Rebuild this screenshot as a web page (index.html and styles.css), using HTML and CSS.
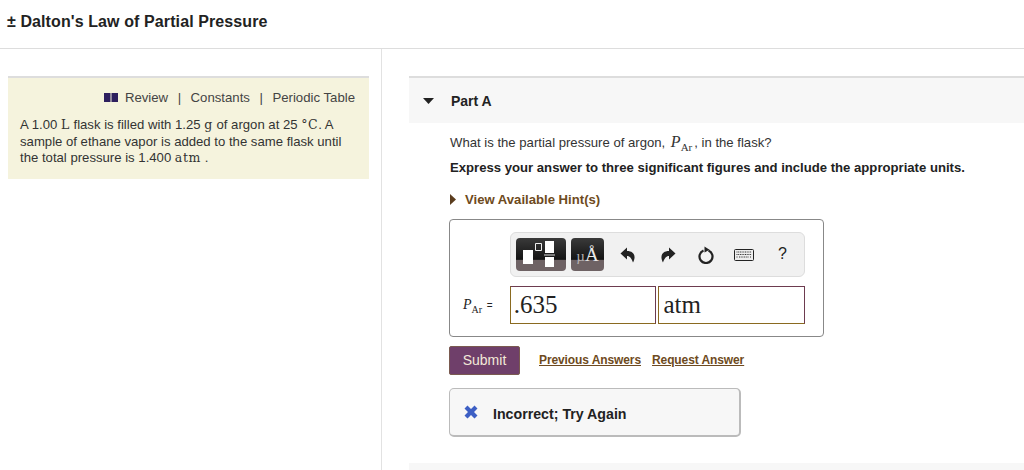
FILE: index.html
```html
<!DOCTYPE html>
<html lang="en">
<head>
<meta charset="utf-8">
<title>Dalton's Law of Partial Pressure</title>
<link rel="stylesheet" href="styles.css">
</head>
<body>
<header class="top"><h1>± Dalton's Law of Partial Pressure</h1></header>
<div class="cols">
  <aside class="left">
    <section class="intro">
      <div class="links">
        <svg class="book" width="14" height="9" viewBox="0 0 14 9"><path d="M0 0h6.500v9H0zM7.500 0H14v9H7.500z" fill="#2d1f5e"/></svg>
        <span>Review</span><i>|</i><span>Constants</span><i>|</i><span>Periodic Table</span>
      </div>
      <p>A 1.00 <span class="m">L</span> flask is filled with 1.25 <span class="m">g</span> of argon at 25 <span class="m">°C</span>. A sample of ethane vapor is added to the same flask until the total pressure is 1.400 <span class="m">atm</span> .</p>
    </section>
  </aside>
  <main class="right">
    <div class="part-head">
      <svg class="tri-down" width="11" height="6" viewBox="0 0 11 6"><path d="M0 0h11L5.500 6z" fill="#222"/></svg>
      <span>Part A</span>
    </div>
    <div class="body">
      <p class="q">What is the partial pressure of argon, <span class="mv">P<sub>Ar</sub></span>, in the flask?</p>
      <p class="ex">Express your answer to three significant figures and include the appropriate units.</p>
      <div class="hint">
        <svg width="6" height="11" viewBox="0 0 6 11"><path d="M0 0l6 5.500L0 11z" fill="#5b3d1e"/></svg>
        <span>View Available Hint(s)</span>
      </div>
      <div class="answer">
        <div class="toolbar">
          <div class="tbtn t1">
            <svg width="50" height="33" viewBox="0 0 50 33">
              <path d="M7 12h10v14H7z" fill="#fff"/>
              <path d="M19.500 5.500h6v7h-6z" fill="none" stroke="#eee"/>
              <path d="M29 3h9v12h-9zM29 19h9v10h-9z" fill="#fff"/>
              <path d="M28 16.500h11v1H28z" fill="#ddd"/>
            </svg>
          </div>
          <div class="tbtn t2"><span class="mu">µ</span><span class="ang">Å</span></div>
          <svg class="ic undo" width="16" height="16" viewBox="0 0 16 16"><path d="M7 .5L.5 6.500 7 12.500V9c3 0 4.500 2.500 6 6.500 3-5 2-11.500-6-11.500z" fill="#222"/></svg>
          <svg class="ic redo" width="16" height="16" viewBox="0 0 16 16"><path d="M9 .5l6.500 6L9 12.500V9c-3 0-4.500 2.500-6 6.500-3-5-2-11.500 6-11.500z" fill="#222"/></svg>
          <svg class="ic reload" width="18" height="18" viewBox="0 0 18 18"><path d="M6.500 4.500a6.500 6.500 0 1 0 5 0" fill="none" stroke="#222" stroke-width="2.200"/><path d="M7.500 .5l5 3.200-5 2.800z" fill="#222"/></svg>
          <svg class="ic kbd" width="20" height="12" viewBox="0 0 20 12"><rect x=".5" y=".5" width="19" height="11" rx="1" fill="#eee" stroke="#222"/><path d="M2.500 3h15M2.500 5.500h15M2.500 8h1M5 8h10M16 8h1.500" stroke="#333" stroke-dasharray="1 .7" fill="none"/></svg>
          <span class="help">?</span>
        </div>
        <div class="row">
          <span class="lab"><span class="mv">P<sub>Ar</sub></span> <span class="eq">=</span></span>
          <div class="inp v">.635</div>
          <div class="inp u">atm</div>
        </div>
      </div>
      <div class="actions">
        <button class="submit" type="button">Submit</button>
        <a class="lnk first">Previous Answers</a>
        <a class="lnk">Request Answer</a>
      </div>
      <div class="fb">
        <svg width="14" height="14" viewBox="0 0 14 14"><path d="M3.500 .5L7 4 10.500 .5 13.500 3.500 10 7l3.500 3.500-3 3L7 10l-3.500 3.500-3-3L4 7 .5 3.500z" fill="#3d5fc4"/></svg>
        <span class="fb-text">Incorrect; Try Again</span>
      </div>
    </div>
    <div class="strip"></div>
  </main>
</div>
</body>
</html>
```

FILE: styles.css
```css
* { box-sizing: border-box; }
html, body { margin: 0; height: 470px; overflow: hidden; }
body { font-family: "Liberation Sans", Arial, sans-serif; color: #222; background: #fff; }
.top { height: 49px; border-bottom: 1px solid #ddd; padding: 13px 0 0 7px; }
h1 { margin: 0; font-size: 16px; line-height: 18px; font-weight: 700; color: #222; letter-spacing: .1px; }
.cols { display: flex; height: 421px; }
.left { width: 382px; border-right: 1px solid #e2e2e2; padding: 27px 12px 0 8px; }
.intro { height: 103px; background: #f5f3dd; border-top: 2px solid #ddd; padding: 11px 14px 0 12px; font-size: 13.200px; color: #333; }
.links { display: flex; justify-content: flex-end; align-items: center; height: 16px; color: #444; }
.book { margin-right: 7px; }
.links i { font-style: normal; margin: 0 9.500px; }
.intro p { margin: 12px 0 0; line-height: 16.500px; font-size: 13.150px; }
.m { font-family: "DejaVu Serif", "Liberation Serif", serif; font-size: 12.500px; letter-spacing: .6px; }
.right { flex: 1; margin: 27px 0 0 27px; display: flex; flex-direction: column; }
.part-head { height: 47px; background: #f7f7f7; border-top: 2px solid #ddd; display: flex; align-items: center; padding-left: 14px; font-size: 14px; font-weight: 700; }
.part-head span { margin-left: 17px; }
.body { padding: 10px 0 0 40px; flex: 1; font-size: 13.130px; }
.q { margin: 0 0 0 1px; line-height: 18px; color: #333; }
.mv { font-family: "Liberation Serif", serif; font-style: italic; font-size: 16px; }
.q .mv { margin: 0 2px; }
.mv sub { font-style: normal; font-size: 11px; line-height: 0; }
.ex { margin: 7px 0 0 1px; font-weight: 700; line-height: 18px; color: #222; }
.hint { display: flex; align-items: center; gap: 9px; margin: 13px 0 0 1px; height: 18px; color: #6e4a20; font-weight: 700; }
.answer { width: 375px; height: 118px; margin-top: 11px; border: 1px solid #888; border-radius: 4px; padding: 12px 18px 0 12px; }
.toolbar { width: 295px; margin-left: 48px; height: 45px; background: #f1f1f1; border: 1px solid #ddd; border-radius: 6px; display: flex; align-items: center; padding-left: 5px; }
.tbtn { height: 33px; border-radius: 4px; background: linear-gradient(#3a3a3a 0, #141414 65%, #6e6264 66%, #6e6264 100%); display: flex; align-items: center; justify-content: center; }
.t1 { width: 50px; }
.t2 { width: 33px; margin-left: 5px; font-family: "Liberation Serif", serif; align-items: baseline; padding-top: 6px; }
.mu { font-size: 15px; color: #b5b0b0; }
.ang { font-size: 19px; color: #e8e8e8; }
.ic { flex: none; }
.undo { margin-left: 16px; }
.redo { margin-left: 24px; }
.reload { margin-left: 21px; }
.kbd { margin-left: 19px; }
.help { margin-left: 24px; font-size: 16px; color: #222; padding-bottom: 2px; }
.row { display: flex; align-items: center; margin-top: 9px; }
.lab { width: 48px; font-size: 9px; padding-left: 1px; }
.lab .mv { font-size: 14px; }
.lab sub { font-size: 10px; }
.eq { font-size: 10px; margin-left: 2px; }
.inp { width: 147px; height: 38px; border: 1px solid #6d3b4f; border-left-color: #8a6a20; border-bottom-color: #8a6a20; font-family: "Liberation Serif", serif; font-size: 25px; line-height: 36px; padding-left: 3px; color: #222; }
.u { margin-left: 2px; padding-left: 4px; }
.actions { display: flex; align-items: center; margin-top: 9px; }
.submit { width: 71px; height: 29px; background: #6f3f6a; border: 1px solid #7a5a50; border-radius: 2px; color: #f2e9d8; font: 14px "Liberation Sans", sans-serif; padding: 0 0 2px; }
.lnk { color: #6e4a20; font-weight: 700; text-decoration: underline; font-size: 12px; margin-left: 11px; letter-spacing: -.1px; padding-bottom: 1px; }
.first { margin-left: 19px; }
.fb { width: 292px; height: 49px; margin-top: 13px; background: #f7f7f7; border: 1px solid #bbb; border-bottom-width: 2px; border-right-width: 2px; border-radius: 5px; display: flex; align-items: center; padding-left: 14px; gap: 15px; font-size: 14.200px; font-weight: 700; }
.fb-text { padding-top: 3px; }
.strip { height: 7px; background: #f7f7f7; }
```
